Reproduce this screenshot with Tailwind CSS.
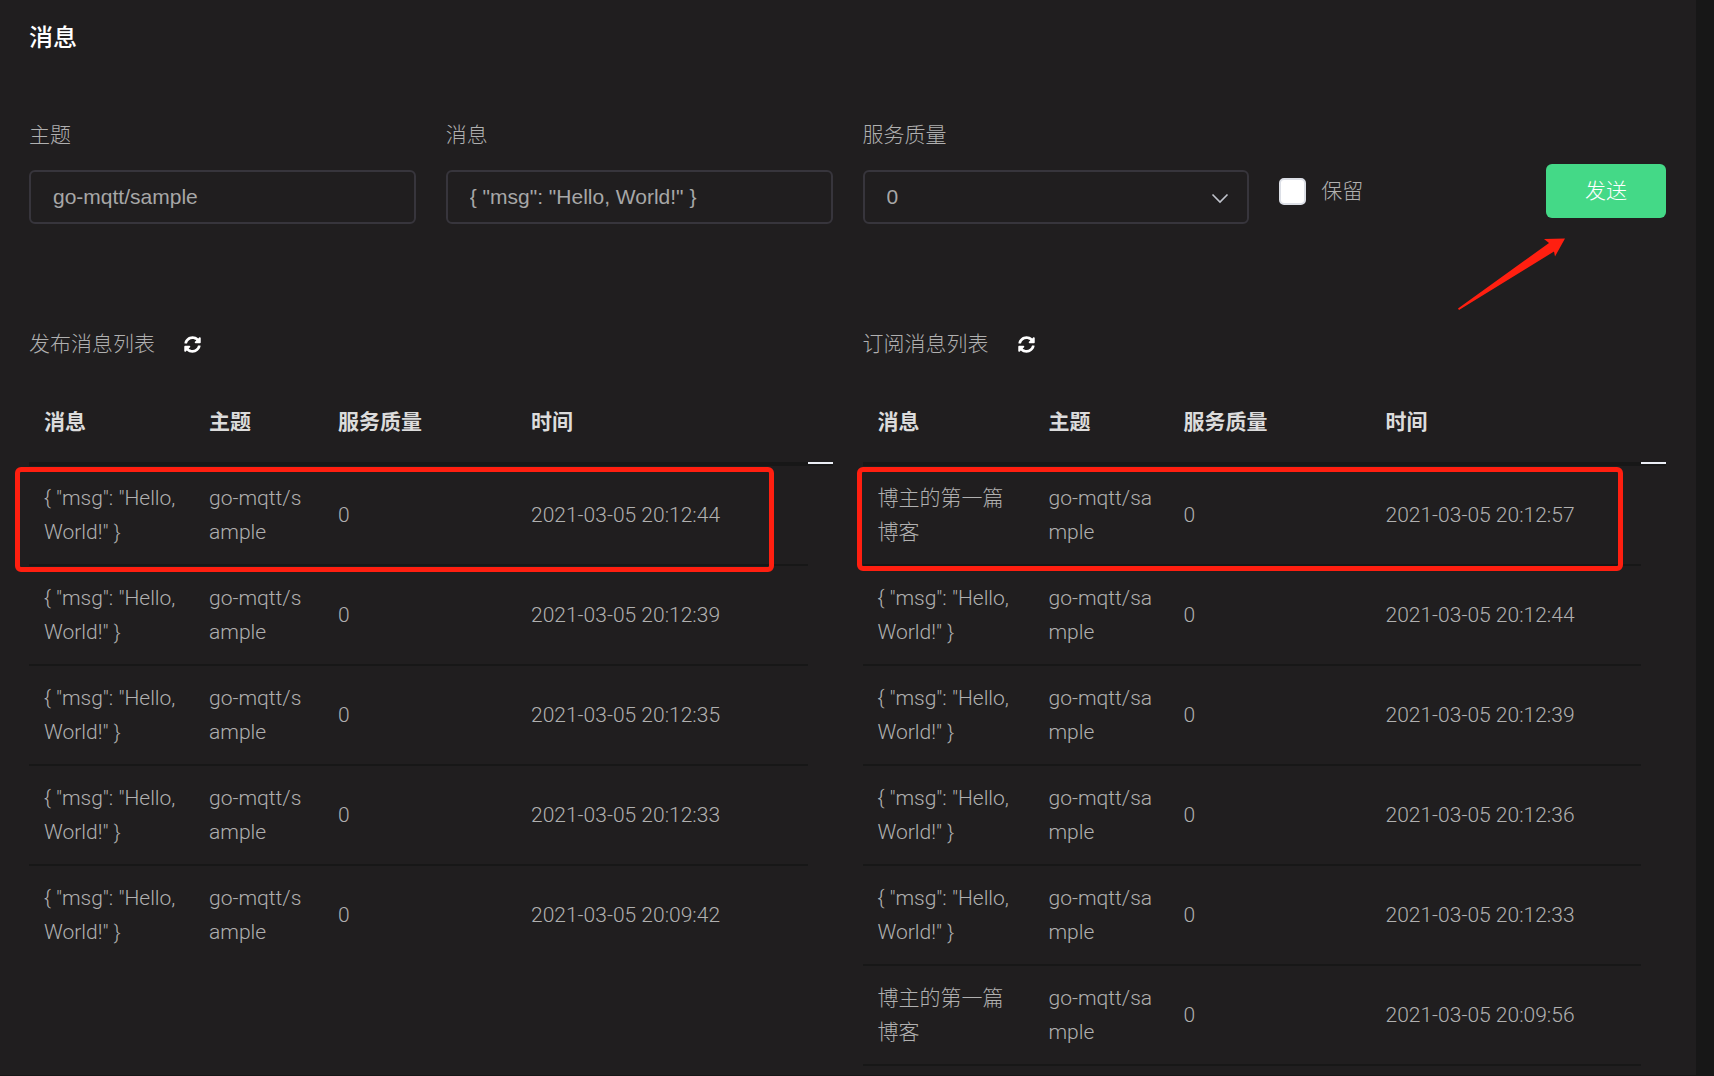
<!DOCTYPE html>
<html lang="zh-CN">
<head>
    <meta charset="UTF-8">
    <meta name="viewport" content="width=device-width, initial-scale=1.0">
    <title>消息</title>
    <script src="https://cdn.jsdelivr.net/npm/@tailwindcss/browser@4"></script>
</head>
<body class="min-h-screen overflow-x-hidden bg-[#171717] pr-[18px] font-['Roboto','Noto_Sans_CJK_SC',sans-serif] text-[21px] font-light leading-[34px] text-[#b0b0b0]">
    <main class="bg-[#201e1f] pt-[21px] pr-[30px] pb-[9px] pl-[29px]">
        <h1 class="text-2xl leading-[34px] font-medium text-white">消息</h1>

        <form class="relative mt-[63px] grid grid-cols-4 gap-[30px]" onsubmit="onSend(event)">
            <div>
                <label for="topic" class="block">主题</label>
                <input type="text" id="topic" value="go-mqtt/sample" class="mt-[18px] block h-[54px] w-full rounded-md border-2 border-[#37353c] bg-transparent px-[22px] font-['Liberation_Sans',sans-serif] font-normal text-[#a7a7a7] outline-none">
            </div>
            <div>
                <label for="message" class="block">消息</label>
                <input type="text" id="message" value='{ "msg": "Hello, World!" }' class="mt-[18px] block h-[54px] w-full rounded-md border-2 border-[#37353c] bg-transparent px-[22px] font-['Liberation_Sans',sans-serif] font-normal text-[#a7a7a7] outline-none">
            </div>
            <div>
                <label for="qos" class="block">服务质量</label>
                <div class="relative mt-[18px]">
                    <select id="qos" class="block h-[54px] w-full appearance-none rounded-md border-2 border-[#37353c] bg-[#201e1f] px-[22px] font-['Liberation_Sans',sans-serif] font-normal text-[#a7a7a7] outline-none">
                        <option>0</option>
                        <option>1</option>
                        <option>2</option>
                    </select>
                    <svg class="pointer-events-none absolute top-[23px] right-5 h-[11px] w-[18px]" viewBox="0 0 18 11" fill="none" stroke="#c0c4cc" stroke-width="1.6"><path d="M1.5 1.5 L9 9 L16.5 1.5"/></svg>
                </div>
            </div>
            <div class="mb-[6px] flex h-[54px] items-center justify-between self-end">
                <div class="flex items-center gap-[15px]">
                    <input type="checkbox" id="retain" class="h-[27px] w-[27px] appearance-none rounded-[5px] border-2 border-[#dcdfe6] bg-white checked:bg-[#44d987]">
                    <label for="retain">保留</label>
                </div>
                <button type="submit" class="h-[54px] w-[120px] rounded-md bg-[#44d987] text-white">发送</button>
            </div>
            <svg class="pointer-events-none absolute right-[99px] -bottom-[86px] h-[72px] w-[110px]" viewBox="0 0 110 72" fill="#ff1f10"><path d="M1 70.5 L92 5 L87 1 L108 0.5 L98 18.5 L97 13.5 L2 72 Z"/></svg>
        </form>

        <div class="mt-[103px] grid grid-cols-2 gap-[30px]">
            <section>
                <div class="flex items-center gap-[29px]">
                    <h2>发布消息列表</h2>
                    <button type="button" aria-label="刷新"><svg class="h-[17px] w-[17px]" viewBox="0 0 512 512" fill="#fff"><path d="M370.72 133.28C339.458 104.008 298.888 87.962 255.848 88c-77.458.068-144.328 53.178-162.791 126.85-1.344 5.363-6.122 9.15-11.651 9.15H24.103c-7.498 0-13.194-6.807-11.807-14.176C33.933 94.924 134.813 8 256 8c66.448 0 126.791 26.136 171.315 68.685L463.03 40.97C478.149 25.851 504 36.559 504 57.941V192c0 13.255-10.745 24-24 24H345.941c-21.382 0-32.09-25.851-16.971-40.971l41.75-41.749zM32 296h134.059c21.382 0 32.09 25.851 16.971 40.971l-41.75 41.75c31.262 29.273 71.835 45.319 114.876 45.28 77.418-.07 144.315-53.144 162.787-126.849 1.344-5.363 6.122-9.15 11.651-9.15h57.304c7.498 0 13.194 6.807 11.807 14.176C478.067 417.076 377.187 504 256 504c-66.448 0-126.791-26.136-171.315-68.685L48.97 471.03C33.851 486.149 8 475.441 8 454.059V320c0-13.255 10.745-24 24-24z"/></svg></button>
                </div>
                <div class="relative mt-[21px]">
                    <table class="w-full table-fixed border-separate border-spacing-0 text-left">
                        <colgroup>
                            <col class="w-[165px]">
                            <col class="w-[129px]">
                            <col class="w-[193px]">
                            <col>
                            <col class="w-[25px]">
                        </colgroup>
                        <thead class="text-[#dcdcdc]">
                            <tr class="h-[84px]">
                                <th class="border-b-4 border-[#171717] px-[15px]">消息</th>
                                <th class="border-b-4 border-[#171717] px-[15px]">主题</th>
                                <th class="border-b-4 border-[#171717] px-[15px]">服务质量</th>
                                <th class="border-b-4 border-[#171717] px-[15px]">时间</th>
                                <td class="border-b-2 border-[#171717] align-bottom"><div class="h-[2px] bg-[#ebeef5]"></div></td>
                            </tr>
                        </thead>
                        <tbody id="published"></tbody>
                    </table>
                    <div class="pointer-events-none absolute top-[85px] right-[59px] -left-[14px] h-[105px] rounded-md border-5 border-[#ff1f10]"></div>
                </div>
            </section>

            <section>
                <div class="flex items-center gap-[29px]">
                    <h2>订阅消息列表</h2>
                    <button type="button" aria-label="刷新"><svg class="h-[17px] w-[17px]" viewBox="0 0 512 512" fill="#fff"><path d="M370.72 133.28C339.458 104.008 298.888 87.962 255.848 88c-77.458.068-144.328 53.178-162.791 126.85-1.344 5.363-6.122 9.15-11.651 9.15H24.103c-7.498 0-13.194-6.807-11.807-14.176C33.933 94.924 134.813 8 256 8c66.448 0 126.791 26.136 171.315 68.685L463.03 40.97C478.149 25.851 504 36.559 504 57.941V192c0 13.255-10.745 24-24 24H345.941c-21.382 0-32.09-25.851-16.971-40.971l41.75-41.749zM32 296h134.059c21.382 0 32.09 25.851 16.971 40.971l-41.75 41.75c31.262 29.273 71.835 45.319 114.876 45.28 77.418-.07 144.315-53.144 162.787-126.849 1.344-5.363 6.122-9.15 11.651-9.15h57.304c7.498 0 13.194 6.807 11.807 14.176C478.067 417.076 377.187 504 256 504c-66.448 0-126.791-26.136-171.315-68.685L48.97 471.03C33.851 486.149 8 475.441 8 454.059V320c0-13.255 10.745-24 24-24z"/></svg></button>
                </div>
                <div class="relative mt-[21px]">
                    <table class="w-full table-fixed border-separate border-spacing-0 text-left">
                        <colgroup>
                            <col class="w-[171px]">
                            <col class="w-[135px]">
                            <col class="w-[202px]">
                            <col>
                            <col class="w-[25px]">
                        </colgroup>
                        <thead class="text-[#dcdcdc]">
                            <tr class="h-[84px]">
                                <th class="border-b-4 border-[#171717] px-[15px]">消息</th>
                                <th class="border-b-4 border-[#171717] px-[15px]">主题</th>
                                <th class="border-b-4 border-[#171717] px-[15px]">服务质量</th>
                                <th class="border-b-4 border-[#171717] px-[15px]">时间</th>
                                <td class="border-b-2 border-[#171717] align-bottom"><div class="h-[2px] bg-[#ebeef5]"></div></td>
                            </tr>
                        </thead>
                        <tbody id="subscribed"></tbody>
                    </table>
                    <div class="pointer-events-none absolute top-[85px] right-[43px] -left-[6px] h-[104px] rounded-md border-5 border-[#ff1f10]"></div>
                </div>
            </section>
        </div>
    </main>
    <script>
        const hello = '{ "msg": "Hello, World!" }';
        const blog = '博主的第一篇博客';
        const topic = 'go-mqtt/sample';

        const published = [
            [hello, topic, 0, '2021-03-05 20:12:44'],
            [hello, topic, 0, '2021-03-05 20:12:39'],
            [hello, topic, 0, '2021-03-05 20:12:35'],
            [hello, topic, 0, '2021-03-05 20:12:33'],
            [hello, topic, 0, '2021-03-05 20:09:42'],
        ];

        const subscribed = [
            [blog, topic, 0, '2021-03-05 20:12:57'],
            [hello, topic, 0, '2021-03-05 20:12:44'],
            [hello, topic, 0, '2021-03-05 20:12:39'],
            [hello, topic, 0, '2021-03-05 20:12:36'],
            [hello, topic, 0, '2021-03-05 20:12:33'],
            [blog, topic, 0, '2021-03-05 20:09:56'],
        ];

        function render(id, rows, lastLine){
            const body = document.getElementById(id);
            rows.forEach((row, i) => {
                const tr = document.createElement('tr');
                row.forEach((value) => {
                    const td = document.createElement('td');
                    td.className = 'h-[100px] border-b-2 px-[15px] py-[15px] break-all';
                    // 发布列表的最后一行没有分隔线
                    td.classList.add(i < rows.length - 1 || lastLine ? 'border-[#171717]' : 'border-transparent');
                    td.textContent = value;
                    tr.appendChild(td);
                });
                body.appendChild(tr);
            });
        }

        function onSend(e){
            e.preventDefault();
        }

        render('published', published, false);
        render('subscribed', subscribed, true);
    </script>
</body>
</html>
